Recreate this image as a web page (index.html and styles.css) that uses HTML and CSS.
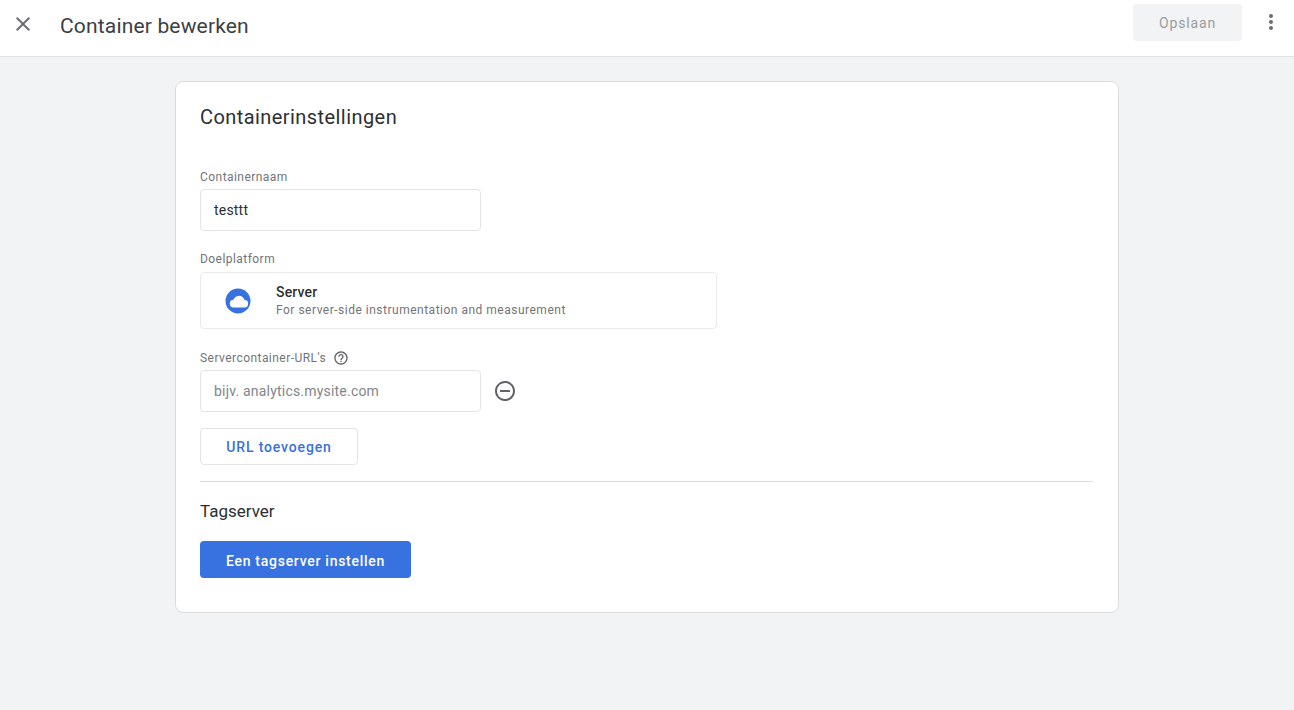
FILE: index.html
```html
<!DOCTYPE html>
<html lang="nl">
<head>
<meta charset="utf-8">
<title>Container bewerken</title>
<link rel="stylesheet" href="styles.css">
</head>
<body>
<header class="topbar">
  <button class="icon-btn close" aria-label="Sluiten">
    <svg width="24" height="24" viewBox="0 0 24 24"><path d="M19 6.41 17.59 5 12 10.59 6.41 5 5 6.41 10.59 12 5 17.59 6.41 19 12 13.41 17.59 19 19 17.59 13.41 12z"/></svg>
  </button>
  <h1 class="page-title">Container bewerken</h1>
  <button class="save" disabled>Opslaan</button>
  <button class="icon-btn more" aria-label="Meer">
    <svg width="24" height="24" viewBox="0 0 24 24"><path d="M12 8c1.1 0 2-.9 2-2s-.9-2-2-2-2 .9-2 2 .9 2 2 2zm0 2c-1.1 0-2 .9-2 2s.9 2 2 2 2-.9 2-2-.9-2-2-2zm0 6c-1.1 0-2 .9-2 2s.9 2 2 2 2-.9 2-2-.9-2-2-2z"/></svg>
  </button>
</header>
<main class="content">
  <section class="card">
    <h2 class="card-title">Containerinstellingen</h2>
    <label class="label label-name">Containernaam</label>
    <div class="field value">testtt</div>
    <label class="label label-platform">Doelplatform</label>
    <div class="platform">
      <svg class="cloud" width="26" height="26" viewBox="0 0 26 26"><circle cx="13" cy="13" r="12.5" fill="#3871e0"/><path fill="#fff" d="M19.6 12.1A5.4 5.4 0 0 0 13 8a5.5 5.5 0 0 0-4.5 3.7 3.9 3.9 0 0 0 .4 7.8h10.3a3.7 3.7 0 0 0 .4-7.4z"/></svg>
      <div class="platform-text">
        <div class="platform-name">Server</div>
        <div class="platform-desc">For server-side instrumentation and measurement</div>
      </div>
    </div>
    <div class="label label-url">
      <span>Servercontainer-URL's</span>
      <svg width="16" height="16" viewBox="0 0 24 24"><path fill="#5f6368" d="M11 18h2v-2h-2v2zm1-16C6.48 2 2 6.48 2 12s4.48 10 10 10 10-4.48 10-10S17.52 2 12 2zm0 18c-4.41 0-8-3.59-8-8s3.59-8 8-8 8 3.59 8 8-3.59 8-8 8zm0-14c-2.21 0-4 1.79-4 4h2c0-1.1.9-2 2-2s2 .9 2 2c0 2-3 1.75-3 5h2c0-2.25 3-2.5 3-5 0-2.21-1.79-4-4-4z"/></svg>
    </div>
    <div class="url-row">
      <div class="field placeholder">bijv. analytics.mysite.com</div>
      <svg width="24" height="24" viewBox="0 0 24 24"><path fill="#5f6368" d="M7 11v2h10v-2H7zm5-9C6.48 2 2 6.48 2 12s4.48 10 10 10 10-4.48 10-10S17.52 2 12 2zm0 18c-4.41 0-8-3.59-8-8s3.59-8 8-8 8 3.59 8 8-3.59 8-8 8z"/></svg>
    </div>
    <button class="btn-outline">URL toevoegen</button>
    <hr class="divider">
    <h3 class="section-title">Tagserver</h3>
    <button class="btn-primary">Een tagserver instellen</button>
  </section>
</main>
</body>
</html>
```
FILE: styles.css
```css
* { box-sizing: border-box; }
html, body { height: 100%; }
body {
  margin: 0;
  background: #f1f3f4;
  font-family: Roboto, "Liberation Sans", sans-serif;
  color: #202124;
  overflow: hidden;
}
button { font-family: inherit; border: 0; background: none; padding: 0; }
.topbar {
  height: 57px;
  background: #fff;
  border-bottom: 1px solid #e3e4e6;
  display: flex;
  align-items: center;
  padding: 0 11px 5px 11px;
}
.icon-btn { width: 24px; height: 24px; display: flex; }
.icon-btn svg { fill: #6a6e72; }
.close { margin-bottom: 4px; }
.more { margin-bottom: 7px; }
.page-title {
  margin: 0 0 0 25px;
  flex: 1;
  font-size: 21px;
  font-weight: 400;
  line-height: 28px;
  letter-spacing: .17px;
  color: #3c4043;
}
.save {
  width: 109px;
  height: 37px;
  margin: 0 17px 6px 0;
  border-radius: 4px;
  background: #f1f3f4;
  color: #9a9da0;
  font-size: 14px;
  font-weight: 400;
  letter-spacing: .85px;
}
.content { padding-top: 24px; display: flex; justify-content: center; }
.card {
  width: 944px;
  height: 532px;
  background: #fff;
  border: 1px solid #dadce0;
  border-radius: 8px;
  padding: 21px 25px 0 24px;
}
.card-title { margin: 0; font-size: 20px; font-weight: 400; line-height: 28px; letter-spacing: .43px; color: #2d2f33; }
.label {
  display: flex;
  align-items: center;
  gap: 7px;
  font-size: 12px;
  line-height: 16px;
  letter-spacing: .45px;
  color: #70757a;
}
.label-name { margin-top: 38px; }
.label-platform { margin-top: 20px; }
.label-url { margin-top: 21px; }
.field {
  width: 281px;
  height: 42px;
  margin-top: 4px;
  border: 1px solid #e3e4e6;
  border-radius: 4px;
  padding: 0 13px;
  display: flex;
  align-items: center;
  font-size: 14px;
}
.value { color: #2d2f33; letter-spacing: .2px; }
.placeholder { color: #80868b; letter-spacing: .2px; margin-top: 0; }
.platform {
  width: 517px;
  height: 57px;
  margin-top: 5px;
  border: 1px solid #e8eaed;
  border-radius: 4px;
  display: flex;
  align-items: center;
  padding-left: 24px;
  gap: 25px;
}
.platform-name { font-size: 14px; font-weight: 500; line-height: 18px; letter-spacing: .15px; color: #2d2f33; }
.platform-desc { font-size: 12px; line-height: 18px; letter-spacing: .5px; color: #70757a; }
.url-row { display: flex; align-items: center; gap: 12px; margin-top: 4px; }
.btn-outline {
  display: block;
  width: 158px;
  height: 37px;
  margin-top: 16px;
  border: 1px solid #e3e4e6;
  border-radius: 4px;
  background: #fff;
  color: #3871e0;
  font-size: 14px;
  font-weight: 500;
  letter-spacing: .85px;
}
.divider { margin: 16px 0 0; border: 0; border-top: 1px solid #dadce0; }
.section-title { margin: 18px 0 0; font-size: 17px; font-weight: 400; line-height: 22px; color: #2d2f33; }
.btn-primary {
  display: block;
  width: 211px;
  height: 37px;
  margin-top: 19px;
  padding-top: 2px;
  border-radius: 4px;
  background: #3871e0;
  color: #fff;
  font-size: 14px;
  font-weight: 500;
  letter-spacing: .73px;
}
```
